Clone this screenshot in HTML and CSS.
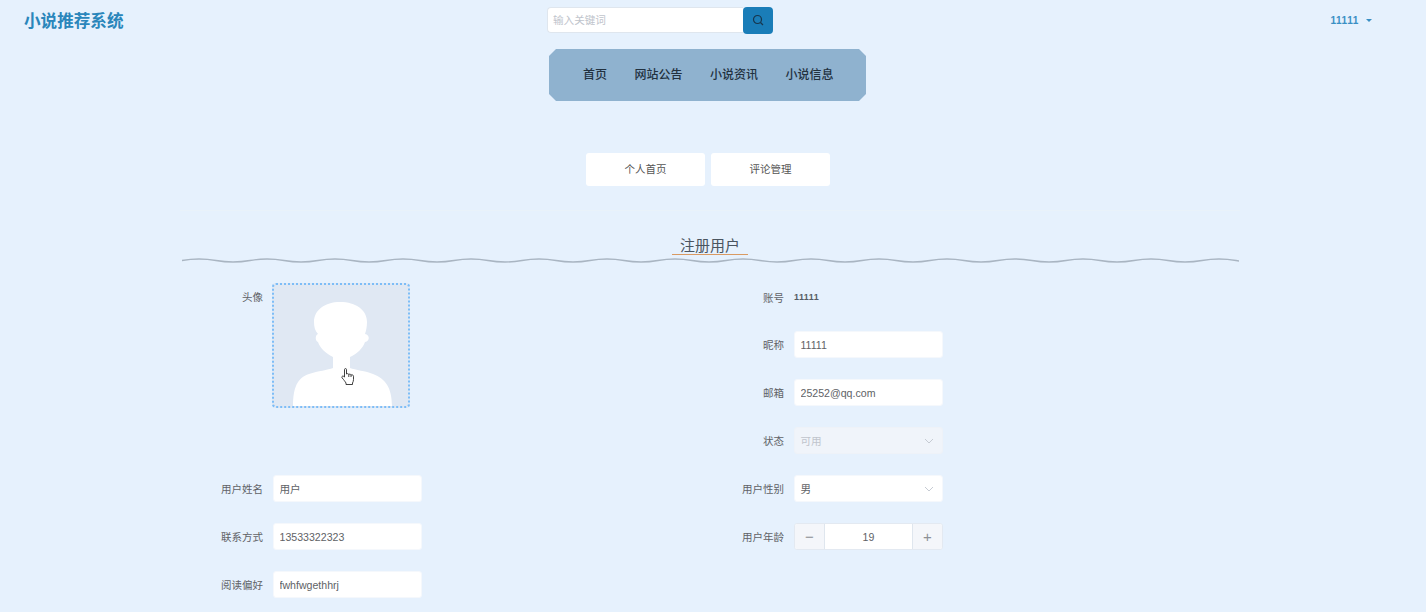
FILE: index.html
```html
<!DOCTYPE html>
<html lang="zh-CN">
<head>
<meta charset="utf-8">
<title>小说推荐系统</title>
<link rel="stylesheet" href="styles.css">
</head>
<body>
<header class="topbar">
  <div class="logo">小说推荐系统</div>
  <div class="search">
    <input class="search-input" type="text" placeholder="输入关键词">
    <button class="search-btn" type="button" aria-label="搜索">
      <svg width="12" height="12" viewBox="0 0 12 12" fill="none" stroke="#17364d" stroke-width="1.2"><circle cx="5.5" cy="5.5" r="4"/><path d="M8.5 8.5 11 11"/></svg>
    </button>
  </div>
  <div class="user"><span>11111</span><i class="caret"></i></div>
</header>

<nav class="nav">
  <a>首页</a><a>网站公告</a><a>小说资讯</a><a>小说信息</a>
</nav>

<div class="tabs">
  <a class="tab">个人首页</a>
  <a class="tab">评论管理</a>
</div>

<main class="section">
  <div class="section-head">
    <h2 class="title">注册用户</h2>
    <svg class="wave" width="1058" height="6" viewBox="0 0 1058 6" fill="none" stroke="#a9b5c2" stroke-width="1.4"><path d="M1 2.5q17 -3 34 0t34 0t34 0t34 0t34 0t34 0t34 0t34 0t34 0t34 0t34 0t34 0t34 0t34 0t34 0t34 0t34 0t34 0t34 0t34 0t34 0t34 0t34 0t34 0t34 0t34 0t34 0t34 0t34 0t34 0t34 0t34 0"/></svg>
  </div>

  <form class="form">
    <div class="col col-left">
      <div class="row row-avatar">
        <label class="label">头像</label>
        <div class="avatar">
          <svg class="silhouette" width="134" height="121" viewBox="1 1 134 121"><path fill="#fff" d="M20 123C20 104 24 94 36 90C45 87 55 86 60 84L60 73C52 69 47 64 45 58C42 57 42 51 45 50C42 47 41 43 41 38C41 26 52 18 67 18C83 18 94 26 94 38C94 43 93 47 92 50C97 51 97 57 92 58C90 64 84 70 77 73L77 84C82 86 93 87 100 90C113 95 119 104 119 123Z"/></svg>
          <svg class="cursor" width="14" height="17" viewBox="0 0 14 17" fill="#fff" stroke="#2b2b2b" stroke-width=".9"><path d="M3.5 1.5C3.5.3 5.5.3 5.5 1.5V6C6.5 5.4 7.5 5.6 7.8 6.4C8.7 5.9 9.8 6.2 10 7C11 6.6 12.5 7 12.5 8.3V11.5C12.5 13 12 14 11.5 15V16.5H5V15C4 13.5 3 12 1.2 10C.3 9 1.3 7.6 2.4 8.2L3.5 9Z"/><path d="M7.8 6.4V9M10 7V9" fill="none"/></svg>
        </div>
      </div>
      <div class="row"><label class="label">用户姓名</label><input class="field" type="text" value="用户"></div>
      <div class="row"><label class="label">联系方式</label><input class="field" type="text" value="13533322323"></div>
      <div class="row"><label class="label">阅读偏好</label><input class="field" type="text" value="fwhfwgethhrj"></div>
    </div>

    <div class="col">
      <div class="row row-static"><label class="label">账号</label><span class="static">11111</span></div>
      <div class="row"><label class="label">昵称</label><input class="field" type="text" value="11111"></div>
      <div class="row"><label class="label">邮箱</label><input class="field" type="text" value="25252@qq.com"></div>
      <div class="row"><label class="label">状态</label>
        <div class="field select disabled"><span>可用</span>
          <svg width="10" height="6" viewBox="0 0 10 6" fill="none" stroke="#c6cbd3"><path d="M1 1l4 4 4-4"/></svg>
        </div>
      </div>
      <div class="row"><label class="label">用户性别</label>
        <div class="field select"><span>男</span>
          <svg width="10" height="6" viewBox="0 0 10 6" fill="none" stroke="#c6cbd3"><path d="M1 1l4 4 4-4"/></svg>
        </div>
      </div>
      <div class="row"><label class="label">用户年龄</label>
        <div class="stepper">
          <span class="step step-minus">−</span>
          <span class="step-value">19</span>
          <span class="step step-plus">+</span>
        </div>
      </div>
    </div>
  </form>
</main>
</body>
</html>
```

FILE: styles.css
```css
* { box-sizing: border-box; }

html, body {
  margin: 0;
  height: 612px;
  overflow: hidden;
}

body {
  background: #e6f1fd;
  font-family: "Liberation Sans", "Noto Sans CJK SC", sans-serif;
  color: #606266;
}

.topbar {
  display: flex;
  align-items: center;
  height: 40px;
  padding: 0 54px 0 24px;
}

.logo {
  width: 523px;
  font-size: 16.6px;
  font-weight: 700;
  color: #2a86bb;
}

.search {
  display: flex;
  align-items: center;
  width: 226px;
}

.search-input {
  width: 196px;
  height: 26px;
  padding: 0 5px;
  border: 1px solid #dfe6ee;
  border-right: 0;
  border-radius: 4px 0 0 4px;
  background: #fff;
  font: 10.6px "Liberation Sans", "Noto Sans CJK SC", sans-serif;
  outline: none;
}

.search-input::placeholder { color: #c0c4cc; }

.search-btn {
  display: flex;
  align-items: center;
  justify-content: center;
  width: 30px;
  height: 27px;
  padding: 0;
  border: 0;
  border-radius: 4px;
  background: #1a7db8;
}

.user {
  display: flex;
  align-items: center;
  gap: 7px;
  margin-left: auto;
  font-size: 10px;
  font-weight: 700;
  letter-spacing: .6px;
  color: #3a8fc4;
}

.caret {
  width: 0;
  height: 0;
  border: 3px solid transparent;
  border-top-color: #3a8fc4;
  border-bottom: 0;
}

.nav {
  display: flex;
  align-items: center;
  gap: 27.5px;
  width: 317px;
  height: 52px;
  margin: 9px 0 0 549px;
  padding: 0 0 4px 34px;
  background: #8fb2cf;
  clip-path: polygon(7px 0, 310px 0, 317px 7px, 317px 45px, 310px 52px, 7px 52px, 0 45px, 0 7px);
  font-size: 12px;
  font-weight: 500;
  color: #22313f;
}

.tabs {
  display: flex;
  gap: 6px;
  margin: 52px 0 0 586px;
}

.tab {
  display: flex;
  align-items: center;
  justify-content: center;
  width: 119px;
  height: 33px;
  padding-bottom: 3px;
  border-radius: 3px;
  background: #fff;
  font-size: 10.5px;
  color: #555;
}

.section {
  width: 1060px;
  margin: 24px 0 0 180px;
}

.section-head {
  display: flex;
  flex-direction: column;
  align-items: center;
  border-top: 1px solid #e9f2fa;
}

.title {
  margin: 26px 0 0;
  padding: 0 7.5px;
  border-bottom: 1px solid #d99a62;
  font-size: 15px;
  font-weight: 400;
  line-height: 17px;
  color: #4a5560;
}

.wave {
  display: block;
  margin-top: 3px;
}

.form {
  display: flex;
  margin-top: 20px;
}

.col {
  display: flex;
  flex-direction: column;
  gap: 21px;
}

.col-left { width: 521px; }

.row {
  display: flex;
  align-items: center;
  gap: 10px;
  height: 27px;
}

.row-static { height: 26px; }

.row-avatar {
  align-items: flex-start;
  height: 170px;
}

.row-avatar .label { line-height: 26px; }

.label {
  width: 83px;
  font-size: 10.5px;
  text-align: right;
  color: #606266;
}

.static {
  font-size: 9px;
  font-weight: 700;
  letter-spacing: .4px;
  color: #555c64;
}

.field {
  width: 149px;
  height: 27px;
  padding: 0 5.5px;
  border: 1px solid #f5f8fc;
  border-radius: 3px;
  background: #fff;
  font: 10.6px "Liberation Sans", "Noto Sans CJK SC", sans-serif;
  color: #606266;
  outline: none;
}

.select {
  display: flex;
  align-items: center;
  justify-content: space-between;
  padding-right: 8px;
}

.disabled {
  background: #f0f4fa;
  border-color: #eef2f8;
  color: #c0c4cc;
}

.stepper {
  display: flex;
  width: 149px;
  height: 27px;
  border: 1px solid #e3e9f1;
  border-radius: 3px;
  background: #fff;
  overflow: hidden;
  font-size: 10.6px;
}

.step {
  display: flex;
  align-items: center;
  justify-content: center;
  width: 30px;
  background: #f4f6fa;
  font-size: 15px;
  color: #8d9096;
}

.step-minus { border-right: 1px solid #dfe6ee; }
.step-plus { border-left: 1px solid #dfe6ee; }

.step-value {
  flex: 1;
  align-self: center;
  text-align: center;
}

.avatar {
  position: relative;
  width: 138px;
  height: 125px;
  margin: -1px 0 0 -1px;
  border: 2px dotted #7dbdf7;
  border-radius: 4px;
  background: #e0e8f3;
  overflow: hidden;
}

.silhouette { display: block; }

.cursor {
  position: absolute;
  left: 67px;
  top: 83px;
}
```
